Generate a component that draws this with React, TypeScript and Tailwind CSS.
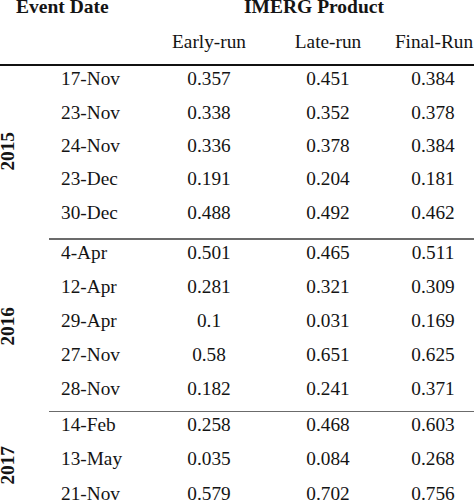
const groups = [
  {
    year: "2015",
    rowH: "h-[33.33px]",
    rows: [
      ["17-Nov", "0.357", "0.451", "0.384"],
      ["23-Nov", "0.338", "0.352", "0.378"],
      ["24-Nov", "0.336", "0.378", "0.384"],
      ["23-Dec", "0.191", "0.204", "0.181"],
      ["30-Dec", "0.488", "0.492", "0.462"],
    ],
  },
  {
    year: "2016",
    rowH: "h-[34px]",
    rows: [
      ["4-Apr", "0.501", "0.465", "0.511"],
      ["12-Apr", "0.281", "0.321", "0.309"],
      ["29-Apr", "0.1", "0.031", "0.169"],
      ["27-Nov", "0.58", "0.651", "0.625"],
      ["28-Nov", "0.182", "0.241", "0.371"],
    ],
  },
  {
    year: "2017",
    rowH: "h-[34.3px]",
    rows: [
      ["14-Feb", "0.258", "0.468", "0.603"],
      ["13-May", "0.035", "0.084", "0.268"],
      ["21-Nov", "0.579", "0.702", "0.756"],
    ],
  },
];

function Group({ year, rowH, rows }: { year: string; rowH: string; rows: string[][] }) {
  return (
    <div className="flex">
      {/* rotated year */}
      <div className="flex w-[49px] shrink-0 items-center pt-[3px]">
        <span className="rotate-180 text-[19.3px] font-bold leading-[16px] [writing-mode:vertical-rl]">
          {year}
        </span>
      </div>

      <div className="flex-1">
        {rows.map((r) => (
          <div
            key={r[0]}
            className={`grid grid-cols-[101px_118px_120px_90px] leading-[26px] ${rowH}`}
          >
            <span className="pl-3">{r[0]}</span>
            <span className="text-center">{r[1]}</span>
            <span className="text-center">{r[2]}</span>
            <span className="text-center">{r[3]}</span>
          </div>
        ))}
      </div>
    </div>
  );
}

export default function App() {
  return (
    <div className="h-[503px] w-[474px] overflow-hidden bg-white font-['Liberation_Serif',serif] text-[19.3px] text-[#141414]">
      <div className="w-[478px]">
        {/* Header */}
        <div className="grid h-[28.7px] grid-cols-[150px_328px] text-[19.5px] font-bold leading-[14px]">
          <span className="pl-4">Event Date</span>
          <span className="text-center">IMERG Product</span>
        </div>
        <div className="grid h-[35.3px] grid-cols-[150px_118px_120px_92px] leading-[26px]">
          <span />
          <span className="text-center">Early-run</span>
          <span className="text-center">Late-run</span>
          <span className="whitespace-nowrap text-center">Final-Run</span>
        </div>
        <div className="h-[2.5px] bg-[#111]" />

        {/* Body */}
        <Group {...groups[0]} />
        <div className="mt-[5px] ml-[49px] h-[1.5px] bg-[#6b6b6b]" />
        <Group {...groups[1]} />
        <div className="mt-[1px] ml-[49px] h-[1.3px] bg-[#6b6b6b]" />
        <Group {...groups[2]} />
      </div>
    </div>
  );
}
